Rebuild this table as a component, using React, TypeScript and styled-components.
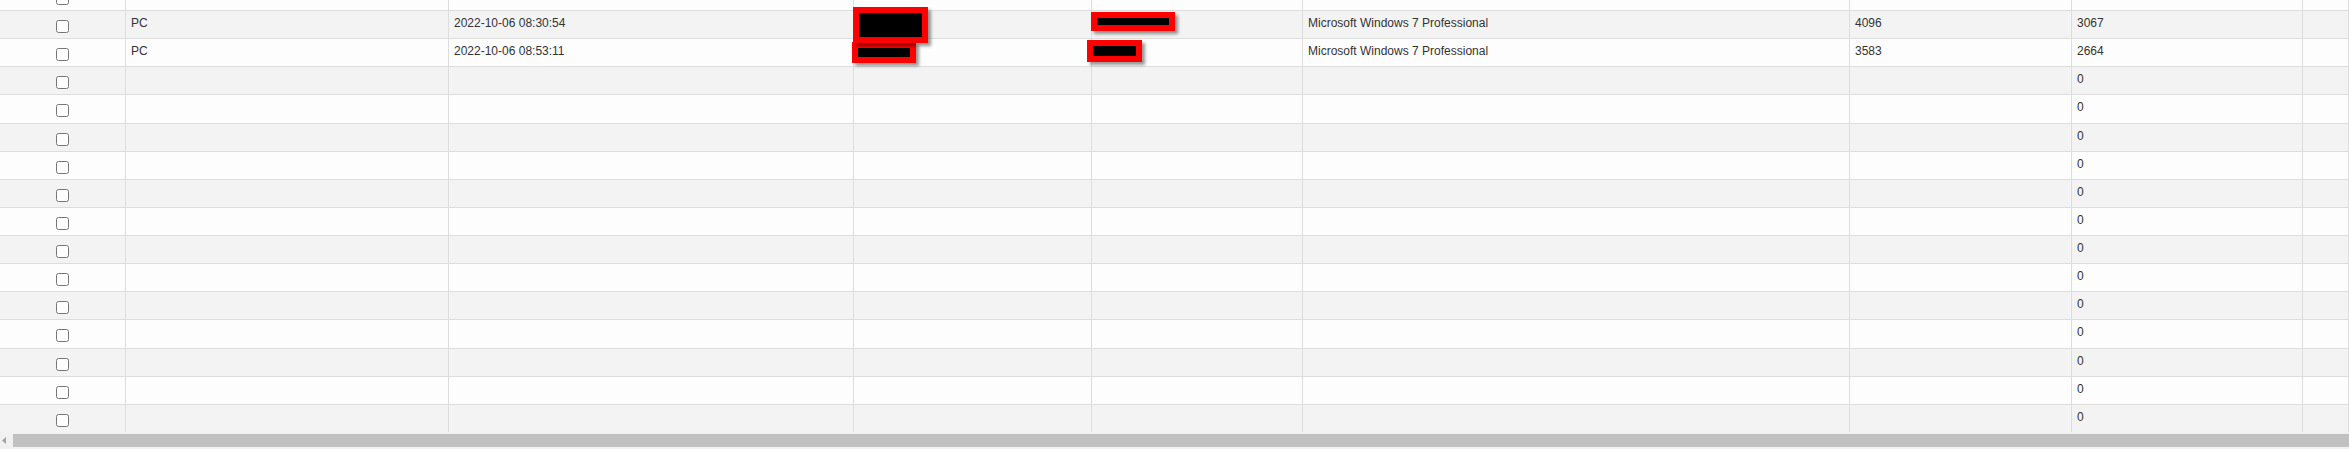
import React from "react";
import styled, { createGlobalStyle } from "styled-components";

const GlobalStyle = createGlobalStyle`
  html, body {
    margin: 0;
    padding: 0;
    background: #ffffff;
  }
  body {
    font-family: "Liberation Sans", Arial, sans-serif;
    font-size: 12px;
    color: #333333;
  }
`;

const Page = styled.div`
  position: relative;
  width: 2349px;
  height: 456px;
  overflow: hidden;
  background: #ffffff;
`;

const Viewport = styled.div`
  height: 432px;
  overflow: hidden;
`;

const Body = styled.div`
  margin-top: -17.14px;
  display: flex;
  flex-direction: column;
`;

const Row = styled.div<{ $striped: boolean }>`
  display: grid;
  grid-template-columns: 126px 323px 405px 238px 211px 547px 222px 231px 1fr;
  height: 28.14px;
  flex: none;
  box-sizing: border-box;
  border-bottom: 1px solid #dddddd;
  background: ${(p) => (p.$striped ? "#f3f3f3" : "#fdfdfd")};
`;

const Cell = styled.div`
  box-sizing: border-box;
  border-right: 1px solid #dddddd;
  padding: 5px 5px 0 5px;
  line-height: 15px;
  white-space: nowrap;
  overflow: hidden;
  color: #333333;
`;

const CheckCell = styled.div`
  box-sizing: border-box;
  border-right: 1px solid #dddddd;
  display: flex;
  justify-content: center;
  align-items: flex-start;
  padding-top: 9px;
`;

const Check = styled.input`
  margin: 0;
  width: 13px;
  height: 13px;
`;

const Scrollbar = styled.div`
  height: 17px;
  display: flex;
  background: #f1f1f1;
`;

const ArrowButton = styled.div`
  width: 13px;
  flex: none;
  display: flex;
  align-items: center;
  justify-content: flex-start;
  padding-left: 2px;
  box-sizing: border-box;
`;

const Thumb = styled.div`
  flex: 1;
  margin: 2px 0;
  background: #c1c1c1;
`;

const Redaction = styled.div<{ $x: number; $y: number; $w: number; $h: number }>`
  position: absolute;
  left: ${(p) => p.$x}px;
  top: ${(p) => p.$y}px;
  width: ${(p) => p.$w}px;
  height: ${(p) => p.$h}px;
  box-sizing: border-box;
  border: 6px solid #ff0000;
  background: #000000;
  box-shadow: 3px 3px 3px rgba(0, 0, 0, 0.4);
`;

type RowData = string[];

const data: RowData[] = [
  ["", "", "", "", "", "", "", ""],
  ["PC", "2022-10-06 08:30:54", "", "", "Microsoft Windows 7 Professional", "4096", "3067", ""],
  ["PC", "2022-10-06 08:53:11", "", "", "Microsoft Windows 7 Professional", "3583", "2664", ""],
  ...Array.from({ length: 13 }, () => ["", "", "", "", "", "", "0", ""]),
];

export default function App() {
  return (
    <Page>
      <GlobalStyle />
      <Viewport>
        <Body>
          {data.map((row, i) => (
            <Row key={i} $striped={i % 2 === 1}>
              <CheckCell>
                <Check type="checkbox" />
              </CheckCell>
              {row.map((v, j) => (
                <Cell key={j}>{v}</Cell>
              ))}
            </Row>
          ))}
        </Body>
      </Viewport>
      <Scrollbar>
        <ArrowButton>
          <svg width="5" height="7" viewBox="0 0 5 7">
            <polygon points="0,3.5 4,0 4,7" fill="#a3a3a3" />
          </svg>
        </ArrowButton>
        <Thumb />
      </Scrollbar>
      <Redaction $x={852} $y={42} $w={64} $h={21} />
      <Redaction $x={853} $y={7} $w={75} $h={36} />
      <Redaction $x={1091} $y={12} $w={84} $h={19} />
      <Redaction $x={1087} $y={40} $w={55} $h={22} />
    </Page>
  );
}
